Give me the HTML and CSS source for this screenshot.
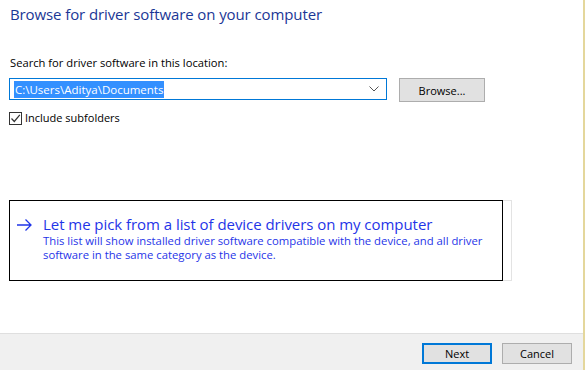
FILE: index.html
```html
<!DOCTYPE html>
<html lang="en">
  <head>
    <meta charset="UTF-8" />
    <title>Browse for driver software</title>
    <link rel="stylesheet" href="styles.css">
  </head>
  <body>
    <div class="window">
      <div class="content">
        <h1 class="title">Browse for driver software on your computer</h1>

        <label class="field-label" for="location">Search for driver software in this location:</label>
        <div class="location-row">
          <div class="combo" id="location">
            <span class="combo-text">C:\Users\Aditya\Documents</span>
            <svg class="chevron" width="10" height="6" viewBox="0 0 10 6">
              <path d="M0.5 0.5 L5 5 L9.5 0.5" fill="none" stroke="#555" stroke-width="1" />
            </svg>
          </div>
          <button class="btn browse">Browse...</button>
        </div>

        <div class="check-row">
          <span class="checkbox">
            <svg width="11" height="11" viewBox="0 0 11 11">
              <path d="M1.5 5.5 L4.3 8.5 L9.8 1.8" fill="none" stroke="#333" stroke-width="1.2" />
            </svg>
          </span>
          <span>Include subfolders</span>
        </div>

        <div class="cmd-link">
          <div class="cmd-focus">
            <svg class="cmd-arrow" width="15" height="12" viewBox="0 0 15 12">
              <path d="M0 6 H14 M8.5 0.5 L14 6 L8.5 11.5" fill="none" stroke="#1f35e8" stroke-width="1.3" />
            </svg>
            <div class="cmd-text">
              <div class="cmd-heading">Let me pick from a list of device drivers on my computer</div>
              <div class="cmd-note">This list will show installed driver software compatible with the device, and all driver software in the same category as the device.</div>
            </div>
          </div>
        </div>
      </div>

      <div class="footer">
        <button class="btn next">Next</button>
        <button class="btn">Cancel</button>
      </div>
    </div>
  </body>
</html>
```

FILE: styles.css
```css
/* Dialog page */
body {
  margin: 0;
  font-family: "Open Sans", "Noto Sans", sans-serif;
  font-size: 11px;
  color: #000;
  background-color: #fff;
}
.window {
  width: 583px;
  height: 370px;
  border-right: 2px solid #e4d79c;
  display: flex;
  flex-direction: column;
}
.content {
  flex: 1;
  padding: 3px 9px 0 9px;
}
.title {
  margin: 0 0 0 1px;
  font-size: 15px;
  font-weight: normal;
  line-height: 22px;
  color: #1b3796;
  letter-spacing: -0.1px;
}
.field-label {
  display: block;
  margin: 30px 0 0 1px;
  font-size: 11.2px;
  line-height: 16px;
}
.location-row {
  display: flex;
  align-items: flex-start;
  margin-top: 7px;
}
.combo {
  width: 378px;
  height: 22px;
  border: 1px solid #0078d7;
  display: flex;
  align-items: center;
  justify-content: space-between;
  padding: 0 7px 0 4px;
  box-sizing: border-box;
}
.combo-text {
  background-color: #3390ff;
  color: #fff;
  font-size: 11.5px;
  line-height: 17px;
  padding: 0 1px;
}
.btn {
  font-family: inherit;
  font-size: 11px;
  color: #000;
  background-color: #e1e1e1;
  border: 1px solid #adadad;
  padding: 0;
  width: 70px;
  height: 21px;
  box-sizing: border-box;
}
.browse {
  width: 86px;
  height: 24px;
  margin-left: 12px;
}
.check-row {
  display: flex;
  align-items: center;
  margin-top: 8px;
  line-height: 16px;
}
.checkbox {
  width: 13px;
  height: 13px;
  border: 1px solid #333;
  box-sizing: border-box;
  display: flex;
  align-items: center;
  justify-content: center;
  margin-right: 3px;
}
.cmd-link {
  margin-top: 74px;
  width: 503px;
  height: 81px;
  border: 1px solid #e3e3e3;
  box-sizing: border-box;
}
.cmd-focus {
  margin: -1px 0 0 -1px;
  width: 494px;
  height: 81px;
  border: 1px solid #000;
  box-sizing: border-box;
  display: flex;
  align-items: flex-start;
  padding: 13px 0 0 7px;
}
.cmd-arrow {
  margin-top: 5px;
  flex: none;
}
.cmd-text {
  margin-left: 11px;
  color: #1f35e8;
}
.cmd-heading {
  font-size: 15px;
  line-height: 20px;
  letter-spacing: -0.05px;
}
.cmd-note {
  font-size: 11.3px;
  line-height: 14px;
  width: 445px;
}
.footer {
  height: 37px;
  border-top: 1px solid #dfdfdf;
  background-color: #f0f0f0;
  display: flex;
  justify-content: flex-end;
  align-items: flex-start;
  gap: 10px;
  padding: 9px 11px 0 0;
  box-sizing: border-box;
}
.next {
  border: 2px solid #0078d7;
}
```
